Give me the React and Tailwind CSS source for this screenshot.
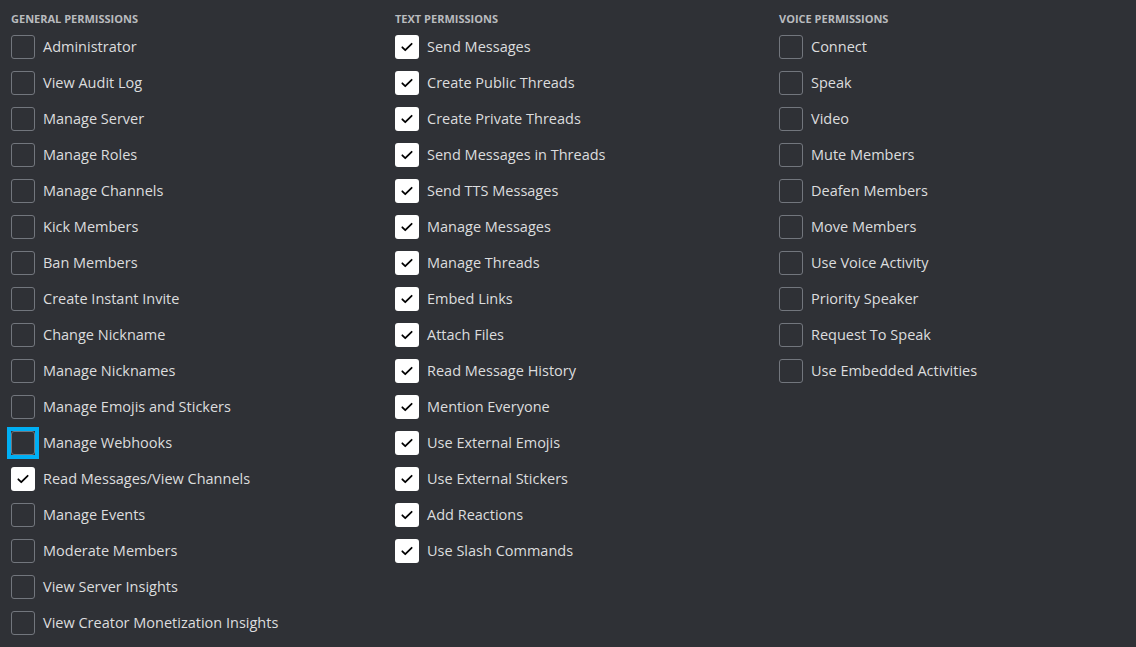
import React from 'react';

const general = [
  ['Administrator', false],
  ['View Audit Log', false],
  ['Manage Server', false],
  ['Manage Roles', false],
  ['Manage Channels', false],
  ['Kick Members', false],
  ['Ban Members', false],
  ['Create Instant Invite', false],
  ['Change Nickname', false],
  ['Manage Nicknames', false],
  ['Manage Emojis and Stickers', false],
  ['Manage Webhooks', false, true],
  ['Read Messages/View Channels', true],
  ['Manage Events', false],
  ['Moderate Members', false],
  ['View Server Insights', false],
  ['View Creator Monetization Insights', false],
];

const text = [
  'Send Messages',
  'Create Public Threads',
  'Create Private Threads',
  'Send Messages in Threads',
  'Send TTS Messages',
  'Manage Messages',
  'Manage Threads',
  'Embed Links',
  'Attach Files',
  'Read Message History',
  'Mention Everyone',
  'Use External Emojis',
  'Use External Stickers',
  'Add Reactions',
  'Use Slash Commands',
].map((t) => [t, true]);

const voice = [
  'Connect',
  'Speak',
  'Video',
  'Mute Members',
  'Deafen Members',
  'Move Members',
  'Use Voice Activity',
  'Priority Speaker',
  'Request To Speak',
  'Use Embedded Activities',
].map((t) => [t, false]);

const Check = () => (
  <svg width="14" height="14" viewBox="0 0 24 24" fill="none" stroke="#000" strokeWidth="3" strokeLinecap="round" strokeLinejoin="round">
    <path d="M4 12.5l5 5L20 6.5" />
  </svg>
);

const Box = ({ checked }) => (
  <span className={`flex items-center justify-center w-6 h-6 rounded-[3px] shrink-0 ${checked ? 'bg-white' : 'border border-[#72767d]'}`}>
    {checked && <Check />}
  </span>
);

const Row = ({ label, checked, focused }) => (
  <label className="flex items-center h-9 gap-2">
    {focused ? (
      <span className="-m-1 border-4 border-[#00aff4] shrink-0">
        <Box checked={checked} />
      </span>
    ) : (
      <Box checked={checked} />
    )}
    <span className="text-[14.5px] text-[#dcddde] leading-5 -mt-px">{label}</span>
  </label>
);

const Column = ({ title, items }) => (
  <div className="flex flex-col">
    <h3 className="text-[11px] font-bold uppercase text-[#b9bbbe] leading-4 mt-[11px] mb-[2px]">{title}</h3>
    {items.map(([l, c, f]) => (
      <Row key={l} label={l} checked={c} focused={f} />
    ))}
  </div>
);

export default function App() {
  return (
    <div className="w-[1136px] h-[647px] bg-[#2f3136] pl-[11px] grid grid-cols-[384px_384px_1fr] overflow-hidden" style={{ fontFamily: '"Open Sans", "Noto Sans", sans-serif' }}>
      <Column title="General Permissions" items={general} />
      <Column title="Text Permissions" items={text} />
      <Column title="Voice Permissions" items={voice} />
    </div>
  );
}
